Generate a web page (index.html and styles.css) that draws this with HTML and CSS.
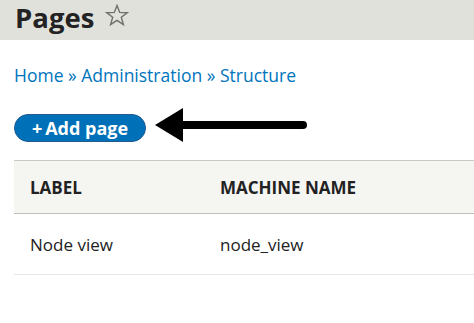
FILE: index.html
```html
<!DOCTYPE html>
<html lang="en">
<head>
    <meta charset="UTF-8">
    <title>Pages</title>
    <link rel="stylesheet" href="styles.css">
</head>
<body>
  <div class="header">
    <h1 class="title">Pages</h1>
    <svg class="star" width="24" height="23" viewBox="0 0 24 23">
      <path d="M12 1.5 L14.7 8.4 L22.2 8.7 L16.3 13.3 L18.4 20.6 L12 16.4 L5.6 20.6 L7.7 13.3 L1.8 8.7 L9.3 8.4 Z" fill="none" stroke="#6f6f6b" stroke-width="1.4" stroke-linejoin="miter"/>
    </svg>
  </div>
  <div class="content">
    <div class="breadcrumb">
      <a href="#">Home</a> » <a href="#">Administration</a> » <a href="#">Structure</a>
    </div>
    <div class="actions">
      <a href="#" class="button"><span class="plus">+</span>Add page</a>
      <svg class="arrow" width="156" height="36" viewBox="0 0 156 36">
        <path d="M0 17 L28 0 L28 34 Z" fill="#000"/>
        <line x1="26" y1="17" x2="148" y2="17" stroke="#000" stroke-width="8" stroke-linecap="round"/>
      </svg>
    </div>
    <table class="list">
      <thead>
        <tr><th class="col1">LABEL</th><th>MACHINE NAME</th></tr>
      </thead>
      <tbody>
        <tr><td>Node view</td><td>node_view</td></tr>
      </tbody>
    </table>
  </div>
</body>
</html>
```
FILE: styles.css
```css
* {
  margin: 0;
  padding: 0;
  box-sizing: border-box;
}
body {
  font-family: "Open Sans", "DejaVu Sans", sans-serif;
  color: #222;
  background: #fff;
}
.header {
  display: flex;
  align-items: flex-start;
  height: 40px;
  padding-left: 15px;
  background-color: #e1e1dc;
}
.title {
  font-size: 27.5px;
  line-height: 35px;
  font-weight: 700;
  color: #232323;
}
.star {
  margin-left: 11px;
  margin-top: 4px;
}
.content {
  padding-left: 14px;
}
.breadcrumb {
  margin-top: 23px;
  font-size: 17.5px;
  line-height: 24px;
  color: #0074bd;
}
.breadcrumb a {
  color: #0074bd;
  text-decoration: none;
}
.actions {
  display: flex;
  align-items: center;
  margin-top: 24px;
}
.button {
  display: inline-block;
  width: 132px;
  height: 28px;
  line-height: 26px;
  text-align: center;
  font-size: 18px;
  font-weight: 700;
  color: #fff;
  text-decoration: none;
  background-color: #0071b8;
  border: 1px solid #1e5c90;
  border-radius: 14px;
}
.button .plus {
  margin-right: 3px;
}
.arrow {
  margin-left: 9px;
  margin-top: -3px;
}
.list {
  margin-top: 16px;
  width: 100%;
  border-collapse: collapse;
}
.list th {
  text-align: left;
  font-size: 17px;
  font-weight: 700;
  height: 53px;
  padding-left: 16px;
  background-color: #f5f5f2;
  border-top: 1px solid #c8c8c4;
  border-bottom: 1px solid #bfbfbb;
}
.list th.col1 {
  width: 190px;
}
.list td {
  font-size: 17px;
  height: 61px;
  padding-left: 16px;
  border-bottom: 1px solid #e6e6e4;
}
```
